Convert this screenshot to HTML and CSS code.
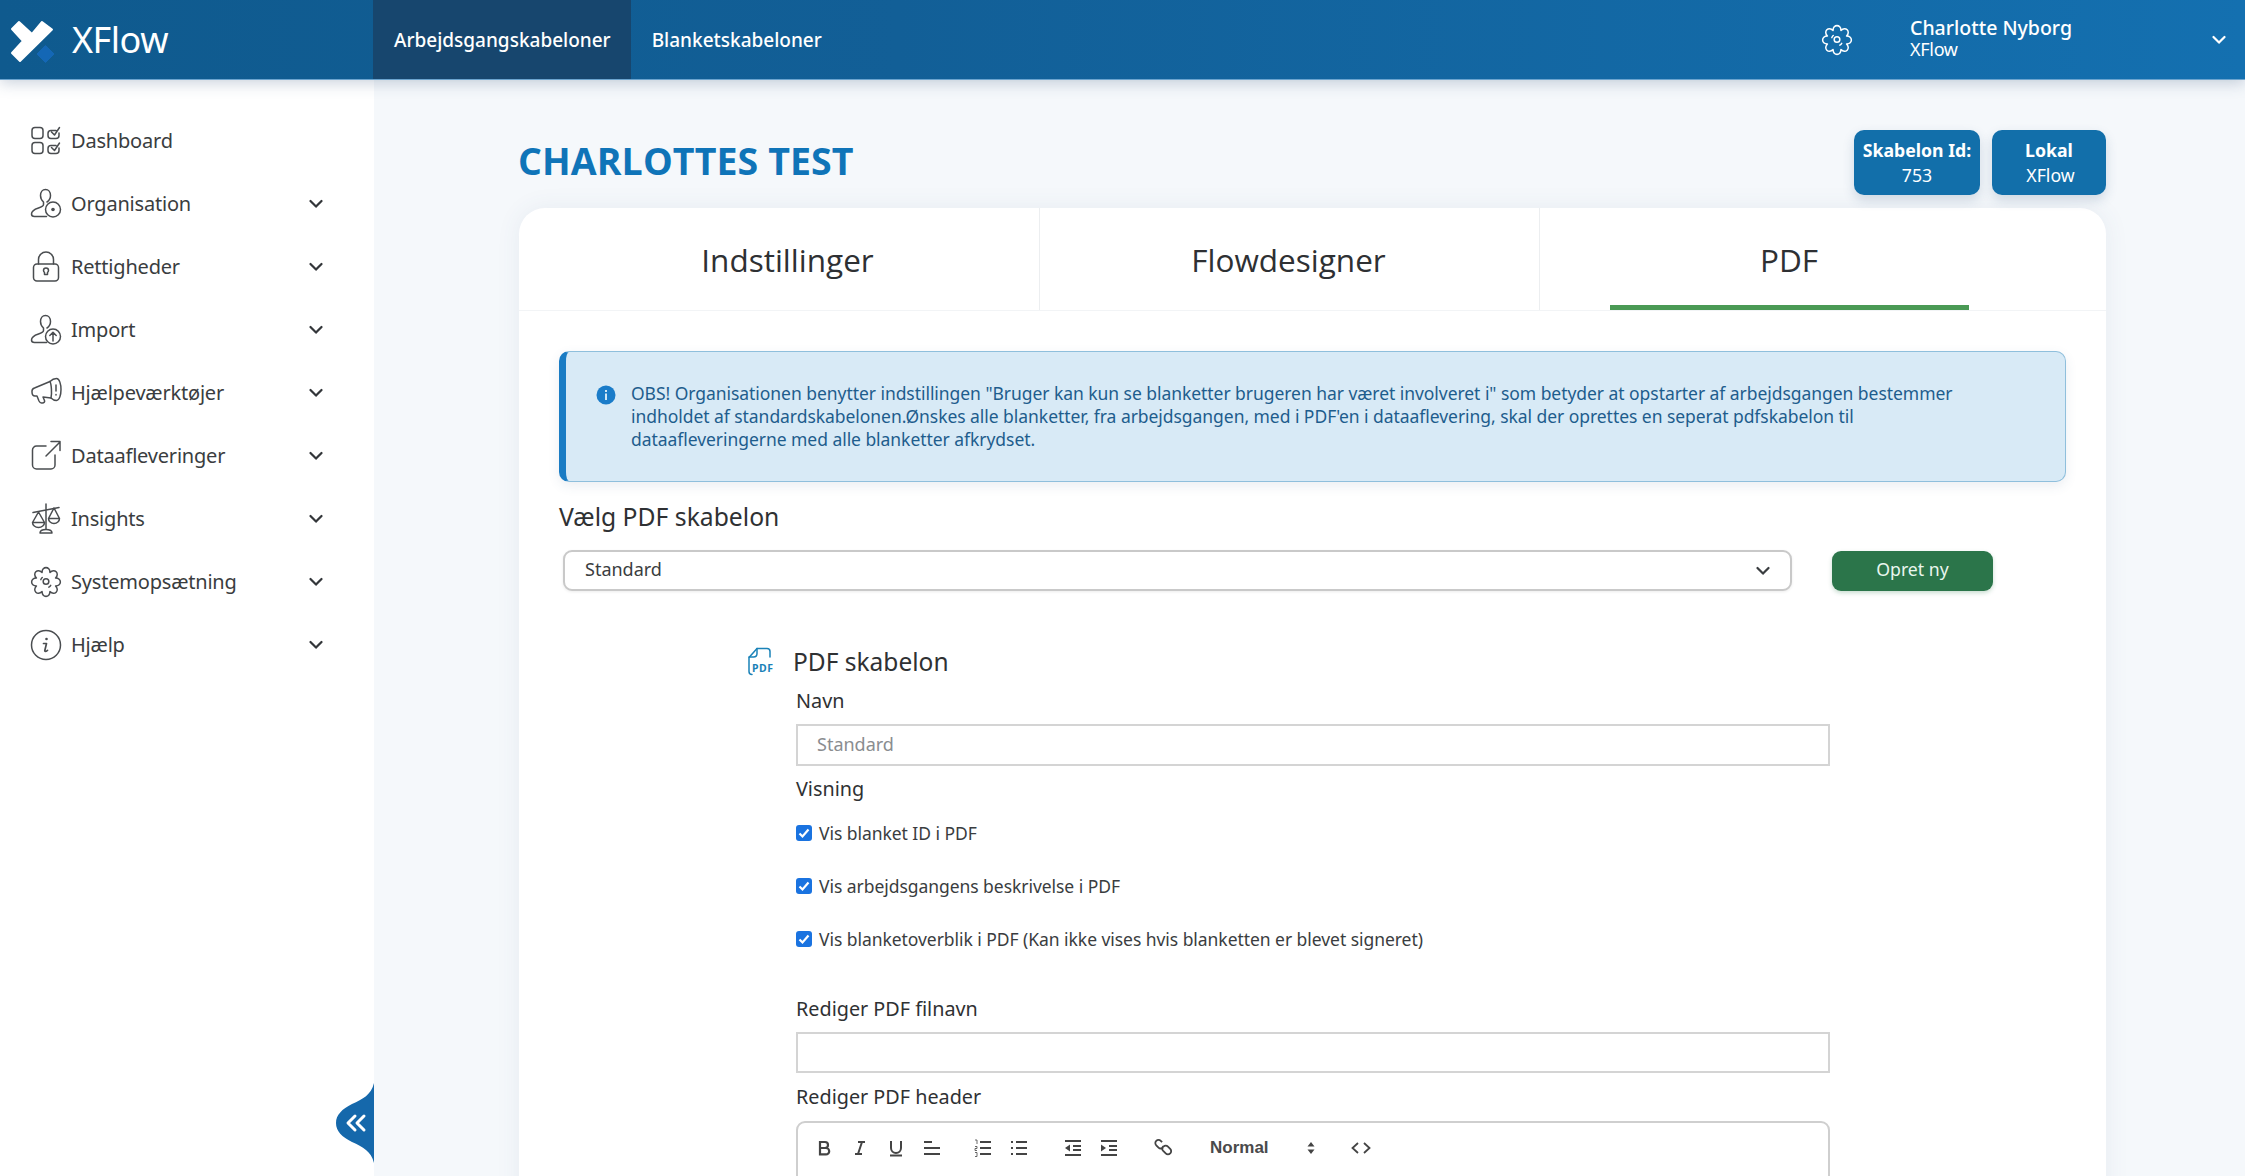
FILE: index.html
```html
<!DOCTYPE html>
<html lang="da">
<head>
<meta charset="utf-8">
<title>XFlow</title>
<link rel="stylesheet" href="styles.css">
</head>
<body>
<svg class="defs" width="0" height="0" aria-hidden="true">
  <symbol id="chev" viewBox="0 0 14 10"><path d="M1.5 2 7 7.6 12.5 2" fill="none" stroke="currentColor" stroke-width="2.2" stroke-linecap="round" stroke-linejoin="round"/></symbol>
  <symbol id="gear" viewBox="-1 -1 34 34"><g fill="none" stroke="currentColor" stroke-width="1.6" stroke-linejoin="round" stroke-linecap="round"><path d="M26.160 20.210C31 25.010 25.010 31 20.210 26.160C20.230 32.980 11.770 32.980 11.790 26.160C6.990 31 1 25.010 5.840 20.210C-.98 20.230-.98 11.770 5.840 11.790C1 6.990 6.990 1 11.790 5.840C11.770-.98 20.230-.98 20.210 5.840C25.010 1 31 6.990 26.160 11.790C32.980 11.770 32.980 20.230 26.160 20.210Z"/><circle cx="16" cy="15.500" r="3"/><path d="M10.500 13.500c.3-1 .8-1.700 1.500-2.300M21 19.500c-.5.800-1.200 1.500-2 2"/></g></symbol>
</svg>
<header class="topbar">
  <div class="brand">
    <svg class="logo" width="44" height="44" viewBox="0 0 44 44"><path d="M35.500 26.500 44 35l-8.500 8.500L27 35z" fill="#1467b5" stroke="#1467b5" stroke-linejoin="round"/><path d="M2 10 9 3l13 12L32 3l10 7.500L10 42l-8-8 11-12z" fill="#fff" stroke="#fff" stroke-linejoin="round" stroke-width="2"/></svg>
    <span class="brand-name">XFlow</span>
  </div>
  <nav class="topnav">
    <a class="topnav-item is-active">Arbejdsgangskabeloner</a>
    <a class="topnav-item">Blanketskabeloner</a>
  </nav>
  <div class="topbar-right">
    <svg class="top-gear" width="32" height="32"><use href="#gear"/></svg>
    <div class="user"><div class="user-name">Charlotte Nyborg</div><div class="user-org">XFlow</div></div>
    <svg class="top-chev" width="14" height="10"><use href="#chev"/></svg>
  </div>
</header>
<div class="shell">
  <aside class="sidebar">
    <ul class="menu">
      <li class="menu-item">
        <svg class="mi" viewBox="0 0 32 32"><g fill="none" stroke="currentColor" stroke-width="1.500" stroke-linejoin="round" stroke-linecap="round"><rect x="2" y="2.500" width="11" height="11" rx="3"/><rect x="2" y="17.500" width="11" height="11" rx="3"/><path d="M26 5.500h-5a3 3 0 0 0-3 3v2a3 3 0 0 0 3 3h5a3 3 0 0 0 3-3V8M21.500 7l3 3 5-7.500M26 20.500h-5a3 3 0 0 0-3 3v2a3 3 0 0 0 3 3h5a3 3 0 0 0 3-3V23M21.500 22.500l3 3 5-7.500"/></g></svg>
        <span class="mt">Dashboard</span>
      </li>
      <li class="menu-item">
        <svg class="mi" viewBox="0 0 32 32"><g fill="none" stroke="currentColor" stroke-width="1.500" stroke-linecap="round" stroke-linejoin="round"><path d="M17 14c2.300-1.500 3.500-4 3.500-6.500C20.500 4 18.500 1.500 15.500 1.500S10.500 4 10.500 7.500c0 3 1.300 5 3 6.500v2.500c0 1.500-2 2.500-5 3.500-4 1.300-7 3.500-7 6 0 1.800 1.500 2.500 3 2.500h12"/><circle cx="23" cy="21.500" r="7.500"/></g><circle cx="23" cy="21.500" r="1.800" fill="currentColor"/></svg>
        <span class="mt">Organisation</span><svg class="mc" width="14" height="10"><use href="#chev"/></svg>
      </li>
      <li class="menu-item">
        <svg class="mi" viewBox="0 0 32 32"><g fill="none" stroke="currentColor" stroke-width="1.500" stroke-linecap="round" stroke-linejoin="round"><rect x="3.500" y="13" width="25" height="17" rx="3.500"/><path d="M8.500 13V8.500a7.500 7.500 0 0 1 15 0V13"/><path d="M13.500 19.500a2.500 2.500 0 1 1 5 0c0 1-.5 1.500-1 2v2h-3v-2c-.5-.5-1-1-1-2z"/></g></svg>
        <span class="mt">Rettigheder</span><svg class="mc" width="14" height="10"><use href="#chev"/></svg>
      </li>
      <li class="menu-item">
        <svg class="mi" viewBox="0 0 32 32"><g fill="none" stroke="currentColor" stroke-width="1.500" stroke-linecap="round" stroke-linejoin="round"><path d="M17 14c2.300-1.500 3.500-4 3.500-6.500C20.500 4 18.500 1.500 15.500 1.500S10.500 4 10.500 7.500c0 3 1.300 5 3 6.500v2.500c0 1.500-2 2.500-5 3.500-4 1.300-7 3.500-7 6 0 1.800 1.500 2.500 3 2.500h12"/><circle cx="23" cy="22.500" r="7.500"/><path d="M23 27v-8.500M19.800 21.500l3.200-3.200 3.200 3.200"/></g></svg>
        <span class="mt">Import</span><svg class="mc" width="14" height="10"><use href="#chev"/></svg>
      </li>
      <li class="menu-item">
        <svg class="mi" viewBox="0 0 32 32"><g fill="none" stroke="currentColor" stroke-width="1.500" stroke-linecap="round" stroke-linejoin="round"><path d="M2 14c0-1.500 1-2.500 2.500-3L20 4.500C21.500 3 24 1.500 26.500 1.500c3 0 4.500 6 4.500 11s-1.500 11-4.500 11c-2 0-4-1-5.500-2.500l-8-1 1.500 3.500c.5 1.500-.5 2.500-2 2.500h-1c-1.500 0-2-1-2.500-2l-2-5H5c-2 0-3-1.500-3-4z"/><path d="M20 4.500c1.500 3 2 12.500 1 16.500"/><path d="M26 8v6M26 17.500v.5"/></g></svg>
        <span class="mt">Hjælpeværktøjer</span><svg class="mc" width="14" height="10"><use href="#chev"/></svg>
      </li>
      <li class="menu-item">
        <svg class="mi" viewBox="0 0 32 32"><g fill="none" stroke="currentColor" stroke-width="1.500" stroke-linecap="round" stroke-linejoin="round"><path d="M16 6H6.500A4 4 0 0 0 2.500 10v15a4 4 0 0 0 4 4H21a4 4 0 0 0 4-4V15"/><path d="M16 16 29.500 2.500M21 1.500h9v9"/></g></svg>
        <span class="mt">Dataafleveringer</span><svg class="mc" width="14" height="10"><use href="#chev"/></svg>
      </li>
      <li class="menu-item">
        <svg class="mi" viewBox="0 0 32 32"><g fill="none" stroke="currentColor" stroke-width="1.500" stroke-linecap="round" stroke-linejoin="round"><path d="M16 1v25M3 9.500 29 4.500"/><path d="M8.500 9 2.500 19.500a6 5 0 0 0 12 0zM2.500 19.500h12M24 5 18.500 15.500a5.500 5 0 0 0 11 0zM18.500 15.500h11"/><path d="M10 30c0-2.500 2.500-3.500 6-3.500s6 1 6 3.500z"/></g></svg>
        <span class="mt">Insights</span><svg class="mc" width="14" height="10"><use href="#chev"/></svg>
      </li>
      <li class="menu-item">
        <svg class="mi" width="32" height="32"><use href="#gear"/></svg>
        <span class="mt">Systemopsætning</span><svg class="mc" width="14" height="10"><use href="#chev"/></svg>
      </li>
      <li class="menu-item">
        <svg class="mi" viewBox="0 0 32 32"><circle cx="16" cy="16" r="14.500" fill="none" stroke="currentColor" stroke-width="1.500"/><g fill="none" stroke="currentColor" stroke-width="1.700" stroke-linecap="round" stroke-linejoin="round"><path d="M13.500 14.500h3l-1.700 7c-.2 1 .8 1.300 2.700-.2"/></g><circle cx="16.500" cy="10" r="1.300" fill="currentColor"/></svg>
        <span class="mt">Hjælp</span><svg class="mc" width="14" height="10"><use href="#chev"/></svg>
      </li>
    </ul>
    <div class="collapse">
      <svg width="38" height="80" viewBox="0 0 38 80"><path d="M38 0v80c-3-12-11-16-22-21C6 54 0 48 0 40s6-14 16-19C27 16 35 12 38 0z" fill="#1568ab"/><path d="M19 33l-7 7 7 7M28 33l-7 7 7 7" fill="none" stroke="#fff" stroke-width="3" stroke-linecap="round" stroke-linejoin="round"/></svg>
    </div>
  </aside>
  <main class="content">
    <div class="title-row">
      <h1 class="title">CHARLOTTES TEST</h1>
      <div class="badges">
        <div class="badge badge-id"><strong>Skabelon Id:</strong><span>753</span></div>
        <div class="badge badge-local"><strong>Lokal</strong><span class="badge-org">XFlow</span></div>
      </div>
    </div>
    <section class="card">
      <div class="tabs">
        <div class="tab tab-a">Indstillinger</div>
        <div class="tab tab-b">Flowdesigner</div>
        <div class="tab tab-c is-active">PDF</div>
      </div>
      <div class="card-body">
        <div class="alert">
          <svg class="alert-icon" width="20" height="20" viewBox="0 0 20 20"><circle cx="10" cy="10" r="9.500" fill="#1a7cc9"/><rect x="9" y="8.500" width="2" height="6.500" fill="#cfe6f5"/><rect x="9" y="5" width="2" height="2" fill="#cfe6f5"/></svg>
          <p>OBS! Organisationen benytter indstillingen "Bruger kan kun se blanketter brugeren har været involveret i" som betyder at opstarter af arbejdsgangen bestemmer<br>indholdet af standardskabelonen.Ønskes alle blanketter, fra arbejdsgangen, med i PDF'en i dataaflevering, skal der oprettes en seperat pdfskabelon til<br>dataafleveringerne med alle blanketter afkrydset.</p>
        </div>
        <h2 class="choose-title">Vælg PDF skabelon</h2>
        <div class="choose-row">
          <div class="select"><span class="select-value">Standard</span><svg width="14" height="10"><use href="#chev"/></svg></div>
          <button class="btn-new">Opret ny</button>
        </div>
        <div class="pdf-head">
          <svg class="pdf-icon" width="28" height="30" viewBox="0 0 28 30"><g fill="none" stroke="#1a82b8" stroke-width="1.500" stroke-linecap="round" stroke-linejoin="round"><path d="M5 27.500c-2 0-3-1-3-3v-14L10 1.500h10c2 0 3 1 3 3v5.500"/><path d="M10 1.500v5c0 2-1.500 3.500-3.500 3.500H2"/></g><text x="5" y="25" class="pdf-text">PDF</text></svg>
          <h3 class="pdf-title">PDF skabelon</h3>
        </div>
        <div class="form">
          <label class="lbl lbl-navn">Navn</label>
          <div class="input input-name">Standard</div>
          <label class="lbl lbl-vis">Visning</label>
          <div class="check"><span class="box"><svg width="16" height="16" viewBox="0 0 16 16"><path d="M3.500 8.500 6.500 11.500 12.500 4.500" fill="none" stroke="#fff" stroke-width="2.200"/></svg></span>Vis blanket ID i PDF</div>
          <div class="check"><span class="box"><svg width="16" height="16" viewBox="0 0 16 16"><path d="M3.500 8.500 6.500 11.500 12.500 4.500" fill="none" stroke="#fff" stroke-width="2.200"/></svg></span>Vis arbejdsgangens beskrivelse i PDF</div>
          <div class="check"><span class="box"><svg width="16" height="16" viewBox="0 0 16 16"><path d="M3.500 8.500 6.500 11.500 12.500 4.500" fill="none" stroke="#fff" stroke-width="2.200"/></svg></span>Vis blanketoverblik i PDF (Kan ikke vises hvis blanketten er blevet signeret)</div>
          <label class="lbl lbl-file">Rediger PDF filnavn</label>
          <div class="input input-file"></div>
          <label class="lbl lbl-head">Rediger PDF header</label>
          <div class="editor">
            <div class="tools">
              <span class="t t-b"><svg width="18" height="18" viewBox="0 0 18 18"><path d="M5 3h5a3 3 0 0 1 0 6H5zM5 9h6a3.200 3.200 0 0 1 0 6.400H5z" fill="none" stroke="#444" stroke-width="2.200"/></svg></span>
              <span class="t"><svg width="18" height="18" viewBox="0 0 18 18"><path d="M7 3h7M4 15h7M11 3 7 15" fill="none" stroke="#444" stroke-width="2"/></svg></span>
              <span class="t"><svg width="18" height="18" viewBox="0 0 18 18"><path d="M4 2v7a5 5 0 0 0 10 0V2" fill="none" stroke="#444" stroke-width="2"/><path d="M3 16.500h12" stroke="#444" stroke-width="2"/></svg></span>
              <span class="t"><svg width="18" height="18" viewBox="0 0 18 18"><path d="M1 3h8M1 9h16M1 15h16" stroke="#444" stroke-width="2"/></svg></span>
              <span class="t t-gap t-gap-first"><svg width="18" height="18" viewBox="0 0 18 18"><path d="M6 3h11M6 9h11M6 15h11" stroke="#444" stroke-width="2"/><path d="M1 1h2v4M1 7.500h2v2H1v2h2M1 13.500h2v4H1" fill="none" stroke="#444" stroke-width=".8"/></svg></span>
              <span class="t"><svg width="18" height="18" viewBox="0 0 18 18"><path d="M6 3h11M6 9h11M6 15h11M1 3h2M1 9h2M1 15h2" stroke="#444" stroke-width="2"/></svg></span>
              <span class="t t-gap"><svg width="18" height="18" viewBox="0 0 18 18"><path d="M1 2h16M1 16h16M9 7h8M9 11h8" stroke="#444" stroke-width="2"/><path d="M6 5.500v7L1 9z" fill="#444"/></svg></span>
              <span class="t"><svg width="18" height="18" viewBox="0 0 18 18"><path d="M1 2h16M1 16h16M9 7h8M9 11h8" stroke="#444" stroke-width="2"/><path d="M1 5.500v7L6 9z" fill="#444"/></svg></span>
              <span class="t t-gap"><svg width="20" height="20" viewBox="0 0 20 20"><g fill="none" stroke="#444" stroke-width="2"><path d="M9 3.500 7.500 2A3.500 3.500 0 0 0 2.500 7L5 9.500a3.500 3.500 0 0 0 5 0"/><path d="M10.500 8.500a3.500 3.500 0 0 1 5 0L18 11a3.500 3.500 0 0 1-5 5l-3-3a3.500 3.500 0 0 1 0-4.500z"/></g></svg></span>
              <span class="t-normal">Normal</span>
              <span class="t-updown"><svg width="10" height="14" viewBox="0 0 10 14"><path d="M5 1 8.500 5.500h-7zM5 13 1.500 8.500h7z" fill="#444"/></svg></span>
              <span class="t-code"><svg width="20" height="12" viewBox="0 0 20 12"><path d="M7 1 1.500 6 7 11M13 1l5.500 5L13 11" fill="none" stroke="#444" stroke-width="1.800"/></svg></span>
            </div>
          </div>
        </div>
      </div>
    </section>
  </main>
</div>
</body>
</html>
```

FILE: styles.css
```css
* { box-sizing: border-box; }
html, body { margin: 0; height: 100%; }
body {
  display: flex;
  flex-direction: column;
  height: 1176px;
  overflow: hidden;
  background: #f5f8fb;
  font-family: "Noto Sans", "Open Sans", sans-serif;
  color: #2f3133;
}
.defs { position: absolute; }
.topbar {
  flex: 0 0 80px;
  display: flex;
  align-items: stretch;
  color: #fff;
  background: linear-gradient(90deg, #0f5a8e 0%, #125f97 40%, #1470b0 100%);
  border-bottom: 1px solid #6ba4cf;
  box-shadow: 0 3px 14px rgba(60, 90, 130, .28);
  position: relative;
  z-index: 3;
}
.brand { width: 373px; display: flex; align-items: center; padding-left: 10px; gap: 18px; }
.logo { flex: none; margin-top: 3px; }
.brand-name { font-family: "Noto Sans", sans-serif; font-size: 36px; letter-spacing: -.5px; line-height: 1; }
.topnav { display: flex; }
.topnav-item {
  display: flex; align-items: center; padding: 0 20px 0 21px;
  font-size: 19px; font-weight: 500; letter-spacing: 0;
}
.topnav-item.is-active { background: #17466e; }
.topbar-right { margin-left: auto; display: flex; align-items: center; }
.top-gear { margin-right: 57px; }
.user { width: 298px; }
.user-name { font-size: 19.500px; font-weight: 500; line-height: 23px; letter-spacing: 0; margin-top: -4px; }
.user-org { font-size: 18px; line-height: 20px; letter-spacing: -.3px; }
.top-chev { margin-right: 19px; margin-left: 4px; }
.shell { flex: 1; display: flex; min-height: 0; }
.sidebar {
  width: 374px; flex: none; background: #fff; position: relative;
  padding-top: 29px;
}
.menu { list-style: none; margin: 0; padding: 0; }
.menu-item {
  height: 63px; display: flex; align-items: center; padding-left: 30px; padding-right: 51px;
  color: #3a3d40; font-size: 20px; letter-spacing: -.2px;
}
.mi { width: 32px; height: 32px; flex: none; color: #4a4d50; margin-right: 9px; }
.mt { flex: 1; }
.mc { color: #33363a; }
.collapse { position: absolute; right: 0; bottom: 13px; display: flex; }
.content { flex: 1; padding: 50px 139px 0 145px; min-width: 0; }
.title-row { display: flex; align-items: center; justify-content: space-between; height: 65px; margin-bottom: 13px; }
.title { margin: 0 0 3px -1px; font-family: "Open Sans", sans-serif; font-size: 37.500px; font-weight: 700; color: #0f74b8; letter-spacing: .1px; line-height: 1; }
.badges { display: flex; gap: 12px; }
.badge {
  height: 65px; border-radius: 10px; background: #126faa; color: #fff;
  display: flex; flex-direction: column; align-items: center; justify-content: center;
  box-shadow: 0 5px 12px rgba(40, 80, 120, .18);
  font-size: 17.700px; line-height: 24.500px;
}
.badge strong { font-weight: 700; }
.badge-id { width: 126px; }
.badge-local { width: 114px; }
.badge-org { margin-left: 3px; }
.card { background: #fff; border-radius: 26px 26px 0 0; box-shadow: 0 0 24px rgba(60, 90, 130, .08); height: 1000px; }
.tabs { display: flex; height: 103px; border-bottom: 1px solid #f2f4f6; }
.tab {
  display: flex; align-items: center; justify-content: center; position: relative;
  font-family: "Open Sans", sans-serif;
  font-size: 31.500px; color: #2e3033;
}
.tab-a { width: 520px; padding-left: 17px; }
.tab-b { width: 501px; padding-right: 2px; border-left: 1px solid #eceef0; border-right: 1px solid #eceef0; }
.tab-c { width: 500px; padding-right: 2px; }
.tab-c.is-active::after {
  content: ""; position: absolute; left: 70px; right: 71px; bottom: 0; height: 5px; background: #4a9a55;
}
.card-body { padding: 40px 40px 0; }
.alert {
  height: 131px; display: flex; align-items: flex-start; gap: 15px;
  padding: 30px 20px 0 30px;
  background: #d8eaf6; border: 1px solid #8fbfdc; border-left: 7px solid #1a7cc4; border-radius: 10px;
  box-shadow: 0 4px 12px rgba(60, 90, 130, .10);
}
.alert-icon { flex: none; margin-top: 3px; }
.alert p { margin: 0; font-size: 17.500px; line-height: 23px; color: #1e5d8d; letter-spacing: -.05px; }
.choose-title { margin: 20px 0 0; font-size: 24.700px; font-weight: 400; line-height: 30px; color: #2f3133; }
.choose-row { display: flex; align-items: center; margin: 18px 0 0 4px; gap: 40px; }
.select {
  width: 1229px; height: 41px; border: 2px solid #c9c9c9; border-radius: 9px; background: #fff;
  display: flex; align-items: center; justify-content: space-between; padding: 0 20px;
  font-size: 18px; color: #3a3d40; box-shadow: 0 1px 3px rgba(0,0,0,.08);
}
.select-value { margin-bottom: 3px; }
.btn-new {
  width: 161px; height: 40px; padding: 0 0 3px; border: 0; border-radius: 9px; background: #2b754a; color: #e9f6ee;
  font-family: "Noto Sans", sans-serif; font-size: 17.700px; box-shadow: 0 2px 4px rgba(40, 120, 70, .25);
}
.pdf-head { display: flex; align-items: center; margin: 54px 0 0 188px; gap: 18px; height: 34px; }
.pdf-icon { flex: none; }
.pdf-text { font-family: "Noto Sans", sans-serif; font-size: 10.500px; font-weight: 700; fill: #1a82b8; letter-spacing: .5px; }
.pdf-title { margin: 0; font-size: 24.500px; font-weight: 400; line-height: 30px; color: #2f3133; }
.form { margin-left: 237px; width: 1034px; }
.lbl { display: block; font-size: 19.800px; font-weight: 400; line-height: 26px; color: #2f3133; }
.lbl-navn { margin-top: 9px; margin-bottom: 10px; }
.lbl-vis { margin-top: 10px; margin-bottom: 19px; }
.lbl-file { margin-top: 45px; margin-bottom: 10px; }
.lbl-head { margin-top: 11px; margin-bottom: 11px; }
.input {
  height: 42px; border: 2px solid #d4d4d4; background: #fff;
  display: flex; align-items: center; padding: 0 0 2px 19px;
  font-size: 18px; color: #8a8d90;
}
.input-file { height: 41px; }
.check {
  display: flex; align-items: center; height: 24px; margin-bottom: 29px;
  font-size: 17.500px; color: #3a3d40; letter-spacing: -.05px;
}
.box {
  width: 16px; height: 16px; border-radius: 3px; background: #1a73e0; margin-right: 7px; flex: none; display: flex;
}
.editor { height: 110px; border: 2px solid #cfcfcf; border-radius: 9px 9px 0 0; background: #fff; }
.tools { display: flex; align-items: center; height: 50px; padding-left: 17px; }
.t { display: flex; width: 18px; margin-right: 18px; }
.t-gap { margin-left: 18px; }
.t-gap-first { margin-left: 15px; }
.t-normal { font-family: "Liberation Sans", sans-serif; font-weight: 700; font-size: 17px; color: #4a4a4a; margin-left: 20px; letter-spacing: 0; width: 96px; }
.t-updown { display: flex; margin-right: 35px; }
.t-code { display: flex; }
```
